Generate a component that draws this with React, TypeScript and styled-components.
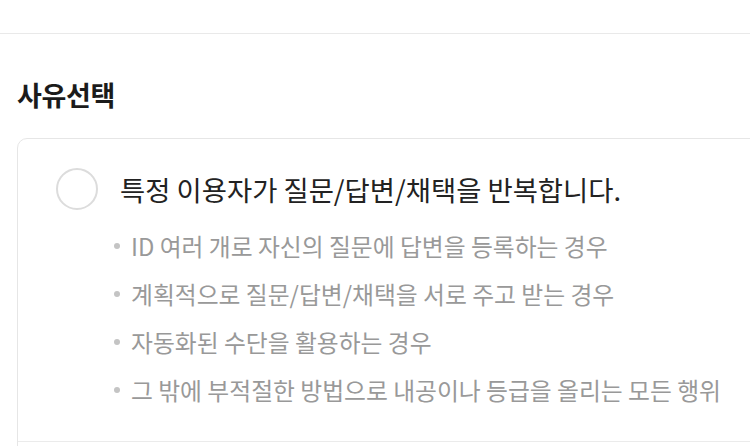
import styled, { createGlobalStyle } from "styled-components";

const GlobalStyle = createGlobalStyle`
  html, body {
    margin: 0;
    padding: 0;
    background: #fff;
    overflow: hidden;
  }
  body {
    font-family: "Noto Sans CJK KR", "Noto Sans", sans-serif;
  }
`;

const reasons = [
  {
    title: "특정 이용자가 질문/답변/채택을 반복합니다.",
    details: [
      "ID 여러 개로 자신의 질문에 답변을 등록하는 경우",
      "계획적으로 질문/답변/채택을 서로 주고 받는 경우",
      "자동화된 수단을 활용하는 경우",
      "그 밖에 부적절한 방법으로 내공이나 등급을 올리는 모든 행위",
    ],
  },
];

function App() {
  return (
    <>
      <GlobalStyle />
      <TopBar />
      <Section>
        <Heading>사유선택</Heading>
        <Card>
          {reasons.map((r) => (
            <Option key={r.title}>
              <OptionHead>
                <Radio />
                <OptionTitle>{r.title}</OptionTitle>
              </OptionHead>
              <DetailList>
                {r.details.map((d) => (
                  <Detail key={d}>{d}</Detail>
                ))}
              </DetailList>
            </Option>
          ))}
          <Option />
        </Card>
      </Section>
    </>
  );
}

const TopBar = styled.div`
  height: 33px;
  border-bottom: 1px solid #e9e9e9;
`;

const Section = styled.section`
  padding: 43px 0 0 17px;
`;

const Heading = styled.h2`
  margin: 0;
  font-size: 27px;
  line-height: 36px;
  font-weight: 700;
  color: #1b1b1b;
  letter-spacing: -0.3px;
`;

const Card = styled.div`
  margin-top: 25px;
  margin-right: -20px;
  border: 1px solid #e6e6e6;
  border-radius: 10px;
`;

const Option = styled.div`
  padding: 29px 0 27px 38px;
  & + & {
    border-top: 1px solid #ebebeb;
  }
`;

const OptionHead = styled.div`
  display: flex;
  align-items: center;
  gap: 22px;
`;

const Radio = styled.span`
  width: 38px;
  height: 38px;
  border: 2px solid #dcdcdc;
  border-radius: 50%;
  flex-shrink: 0;
`;

const OptionTitle = styled.span`
  font-size: 27.4px;
  line-height: 36px;
  color: #222;
`;

const DetailList = styled.ul`
  list-style: none;
  margin: 12px 0 0;
  padding: 0 0 0 58px;
`;

const Detail = styled.li`
  position: relative;
  padding-left: 17px;
  font-size: 23.8px;
  line-height: 48px;
  color: #999;

  &::before {
    content: "";
    position: absolute;
    left: 0;
    top: 21px;
    width: 6px;
    height: 6px;
    border-radius: 50%;
    background: #c4c4c4;
  }
`;

export default App;
